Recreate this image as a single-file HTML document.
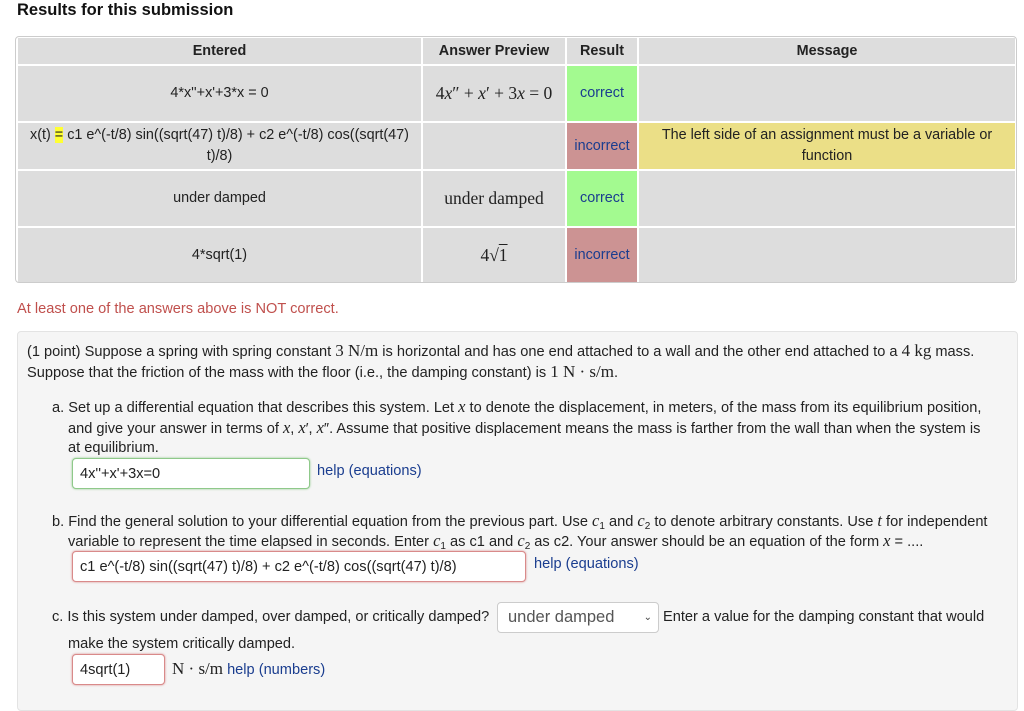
<!DOCTYPE html>
<html><head><meta charset="utf-8"><style>
*{margin:0;padding:0;box-sizing:border-box}
body{width:1024px;height:710px;background:#fff;font-family:"Liberation Sans",sans-serif;font-size:14px;color:#222;position:relative;overflow:hidden}
.a{position:absolute}
.c{position:absolute;display:flex;align-items:center;justify-content:center;text-align:center;background:#ddd;font-size:14.4px;line-height:21px}
.h{font-weight:bold;font-size:14.4px}
.g{background:#a3fa90;color:#1a3d8f}
.r{background:#cc9393;color:#1a3d8f}
.y{background:#ebdf87}
.m{font-family:"Liberation Serif",serif;font-size:17.5px}
i.v{font-family:"Liberation Serif",serif;font-style:italic;font-size:16.5px}
.s{font-family:"Liberation Serif",serif;font-size:17px}
sub{font-size:10px;line-height:0;vertical-align:-3px}
.inp{position:absolute;background:#fff;border-radius:4px;font-size:14.6px;padding-left:7px;display:flex;align-items:center}
.lnk{position:absolute;color:#1a3d8f;font-size:14.6px}
.t{position:absolute;font-size:14.6px;line-height:20px;color:#222;white-space:nowrap}
</style></head><body>
<div class="a" style="left:17px;top:1px;font-weight:bold;font-size:16.5px;color:#111">Results for this submission</div>
<div class="a" style="left:15px;top:36px;width:1002px;height:247px;border:1px solid #ccc;border-radius:4px;background:#fff"></div>
<div class="c h" style="left:18px;top:38px;width:403px;height:26px">Entered</div>
<div class="c h" style="left:423px;top:38px;width:142px;height:26px">Answer Preview</div>
<div class="c h" style="left:567px;top:38px;width:70px;height:26px">Result</div>
<div class="c h" style="left:639px;top:38px;width:376px;height:26px">Message</div>

<div class="c" style="left:18px;top:66px;width:403px;height:55px">4*x''+x'+3*x = 0</div>
<div class="c m" style="left:423px;top:66px;width:142px;height:55px">4<i>x</i>″&nbsp;+&nbsp;<i>x</i>′&nbsp;+&nbsp;3<i>x</i>&nbsp;=&nbsp;0</div>
<div class="c g" style="left:567px;top:66px;width:70px;height:55px">correct</div>
<div class="c" style="left:639px;top:66px;width:376px;height:55px"></div>

<div class="c" style="left:18px;top:123px;width:403px;height:46px;padding:0 10px"><span>x(t) <span style="background:#ffff33">=</span> c1 e^(-t/8) sin((sqrt(47) t)/8) + c2 e^(-t/8) cos((sqrt(47) t)/8)</span></div>
<div class="c" style="left:423px;top:123px;width:142px;height:46px"></div>
<div class="c r" style="left:567px;top:123px;width:70px;height:46px">incorrect</div>
<div class="c y" style="left:639px;top:123px;width:376px;height:46px;padding:0 18px">The left side of an assignment must be a variable or function</div>

<div class="c" style="left:18px;top:171px;width:403px;height:55px">under damped</div>
<div class="c m" style="left:423px;top:171px;width:142px;height:55px">under damped</div>
<div class="c g" style="left:567px;top:171px;width:70px;height:55px">correct</div>
<div class="c" style="left:639px;top:171px;width:376px;height:55px"></div>

<div class="c" style="left:18px;top:228px;width:403px;height:54px">4*sqrt(1)</div>
<div class="c m" style="left:423px;top:228px;width:142px;height:54px">4√<span style="text-decoration:overline">1</span></div>
<div class="c r" style="left:567px;top:228px;width:70px;height:54px">incorrect</div>
<div class="c" style="left:639px;top:228px;width:376px;height:54px"></div>

<div class="a" style="left:17px;top:301px;color:#c0504d;font-size:14.6px">At least one of the answers above is NOT correct.</div>

<div class="a" style="left:17px;top:331px;width:1001px;height:380px;background:#f5f5f5;border:1px solid #e3e3e3;border-radius:4px"></div>
<div class="t" style="left:27px;top:341px">(1 point) Suppose a spring with spring constant <span class="s">3 N/m</span> is horizontal and has one end attached to a wall and the other end attached to a <span class="s">4 kg</span> mass.</div>
<div class="t" style="left:27px;top:362px">Suppose that the friction of the mass with the floor (i.e., the damping constant) is <span class="s">1 N · s/m</span>.</div>

<div class="t" style="left:52px;top:397px">a. Set up a differential equation that describes this system. Let <i class="v">x</i> to denote the displacement, in meters, of the mass from its equilibrium position,</div>
<div class="t" style="left:68px;top:418px">and give your answer in terms of <i class="v">x</i>, <i class="v">x</i>′, <i class="v">x</i>″. Assume that positive displacement means the mass is farther from the wall than when the system is</div>
<div class="t" style="left:68px;top:438px">at equilibrium.</div>
<div class="inp" style="left:72px;top:458px;width:238px;height:31px;border:1px solid #8fc98a;box-shadow:0 0 2px #8fc98a">4x''+x'+3x=0</div>
<div class="lnk" style="left:317px;top:463px">help (equations)</div>

<div class="t" style="left:52px;top:511px">b. Find the general solution to your differential equation from the previous part. Use <i class="v">c</i><sub>1</sub> and <i class="v">c</i><sub>2</sub> to denote arbitrary constants. Use <i class="v">t</i> for independent</div>
<div class="t" style="left:68px;top:531px">variable to represent the time elapsed in seconds. Enter <i class="v">c</i><sub>1</sub> as c1 and <i class="v">c</i><sub>2</sub> as c2. Your answer should be an equation of the form <i class="v">x</i> = ....</div>
<div class="inp" style="left:72px;top:551px;width:454px;height:31px;border:1px solid #d98a8a;box-shadow:0 0 2px #d98a8a">c1 e^(-t/8) sin((sqrt(47) t)/8) + c2 e^(-t/8) cos((sqrt(47) t)/8)</div>
<div class="lnk" style="left:534px;top:556px">help (equations)</div>

<div class="t" style="left:52px;top:607px">c. Is this system under damped, over damped, or critically damped?</div>
<div class="inp" style="left:497px;top:602px;width:162px;height:31px;border:1px solid #ccc;font-size:16.5px;color:#555;padding-left:10px">under damped<span style="position:absolute;right:6px;font-size:10px;color:#444">⌄</span></div>
<div class="t" style="left:663px;top:607px">Enter a value for the damping constant that would</div>
<div class="t" style="left:68px;top:634px">make the system critically damped.</div>
<div class="inp" style="left:72px;top:654px;width:93px;height:31px;border:1px solid #d98a8a;box-shadow:0 0 2px #d98a8a">4sqrt(1)</div>
<div class="t" style="left:172px;top:659px"><span class="s">N · s/m</span> <span style="color:#1a3d8f">help (numbers)</span></div>
</body></html>
